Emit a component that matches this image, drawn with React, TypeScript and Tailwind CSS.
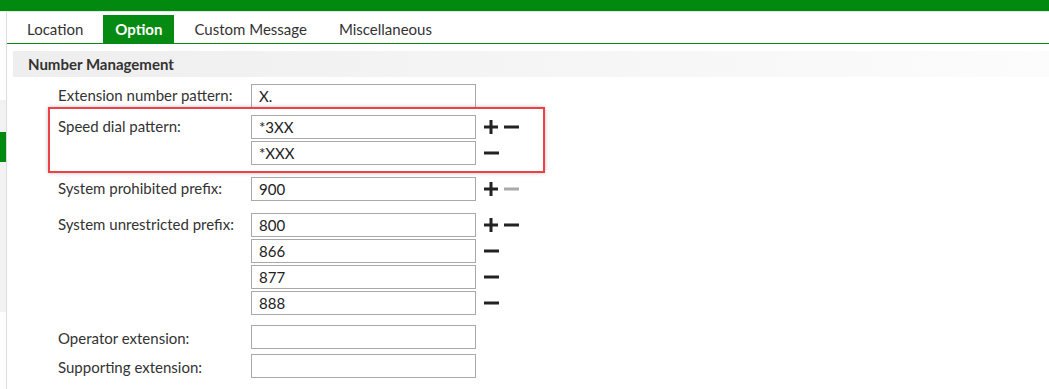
import React from "react";

function Plus({ disabled = false }: { disabled?: boolean }) {
  const c = disabled ? "#aaaaaa" : "#222222";
  return (
    <svg width="14" height="14" viewBox="0 0 14 14" className="shrink-0">
      <rect x="0" y="5.5" width="14" height="3" fill={c} />
      <rect x="5.5" y="0" width="3" height="14" fill={c} />
    </svg>
  );
}

function Minus({ disabled = false }: { disabled?: boolean }) {
  const c = disabled ? "#aaaaaa" : "#222222";
  return (
    <svg width="15" height="14" viewBox="0 0 15 14" className="shrink-0">
      <rect x="0" y="5.5" width="15" height="3" fill={c} />
    </svg>
  );
}

function Field({ value }: { value: string }) {
  return (
    <div className="w-[225px] h-[24px] border border-[#a9a9a9] bg-white px-[7px] flex items-center leading-[20px] text-[#222]">
      {value}
    </div>
  );
}

type Line = { value: string; plus?: boolean; minus?: boolean; minusDisabled?: boolean };

function Row({
  label,
  lines,
  className = "",
  labelPad = "pt-[1px]",
  children,
}: {
  label: string;
  lines: Line[];
  className?: string;
  labelPad?: string;
  children?: React.ReactNode;
}) {
  return (
    <div className={`relative flex ${className}`}>
      {children}
      <div className={`w-[193px] shrink-0 leading-[20px] ${labelPad}`}>{label}</div>
      <div className="flex flex-col gap-[2px]">
        {lines.map((l, i) => (
          <div key={i} className="flex items-center">
            <Field value={l.value} />
            <div className="flex items-center gap-[6px] pl-[8px]">
              {l.plus && <Plus />}
              {l.minus && <Minus disabled={l.minusDisabled} />}
            </div>
          </div>
        ))}
      </div>
    </div>
  );
}

export default function App() {
  const tabs = ["Location", "Option", "Custom Message", "Miscellaneous"];
  return (
    <div className="w-[1049px] h-[389px] bg-white overflow-hidden font-['Lato','Open_Sans',sans-serif] text-[15px] text-[#333]">
      <div className="h-[11px] bg-[#028a10]" />
      <div className="h-px bg-[#e2e9e2]" />
      <div className="flex h-[377px]">
        <div className="w-[6px] shrink-0 flex flex-col">
          <div className="h-[88px] bg-white" />
          <div className="h-[32px] bg-[#f2f2f2]" />
          <div className="h-[30px] bg-[#028a10]" />
          <div className="h-[150px] bg-[#f2f2f2]" />
          <div className="flex-1 bg-white" />
        </div>
        <div className="flex-1 border-l border-[#dcdcdc] flex flex-col">
          <div className="flex pl-[8px] pt-[3px] gap-[8px] border-b border-[#0a8a14]">
            {tabs.map((t) => (
              <div
                key={t}
                className={`h-[28px] px-3 flex items-center leading-[20px] ${
                  t === "Option" ? "bg-[#058a12] text-white font-bold" : "text-[#333]"
                }`}
              >
                {t}
              </div>
            ))}
          </div>
          <div className="ml-[6px] mt-[7px] h-[26px] flex items-center pl-[15px] font-bold text-[#333] bg-linear-to-r from-[#eeeeee] to-[#fcfcfc]">
            Number Management
          </div>
          <div className="pl-[51px] flex flex-col">
            <Row label="Extension number pattern:" lines={[{ value: "X." }]} className="mt-[7px]" />
            <Row
              label="Speed dial pattern:"
              lines={[
                { value: "*3XX", plus: true, minus: true },
                { value: "*XXX", minus: true },
              ]}
              className="mt-[7px]"
            >
              <div className="absolute left-[-10px] top-[-8px] w-[497px] h-[66px] border-2 border-[#ec4147] shadow-[0_0_4px_rgba(0,0,0,0.25)] pointer-events-none" />
            </Row>
            <Row
              label="System prohibited prefix:"
              lines={[{ value: "900", plus: true, minus: true, minusDisabled: true }]}
              className="mt-[12px]"
            />
            <Row
              label="System unrestricted prefix:"
              lines={[
                { value: "800", plus: true, minus: true },
                { value: "866", minus: true },
                { value: "877", minus: true },
                { value: "888", minus: true },
              ]}
              className="mt-[12px]"
            />
            <Row label="Operator extension:" lines={[{ value: "" }]} className="mt-[10px]" labelPad="pt-[3px]" />
            <Row label="Supporting extension:" lines={[{ value: "" }]} className="mt-[5px]" labelPad="pt-[3px]" />
          </div>
        </div>
      </div>
    </div>
  );
}
